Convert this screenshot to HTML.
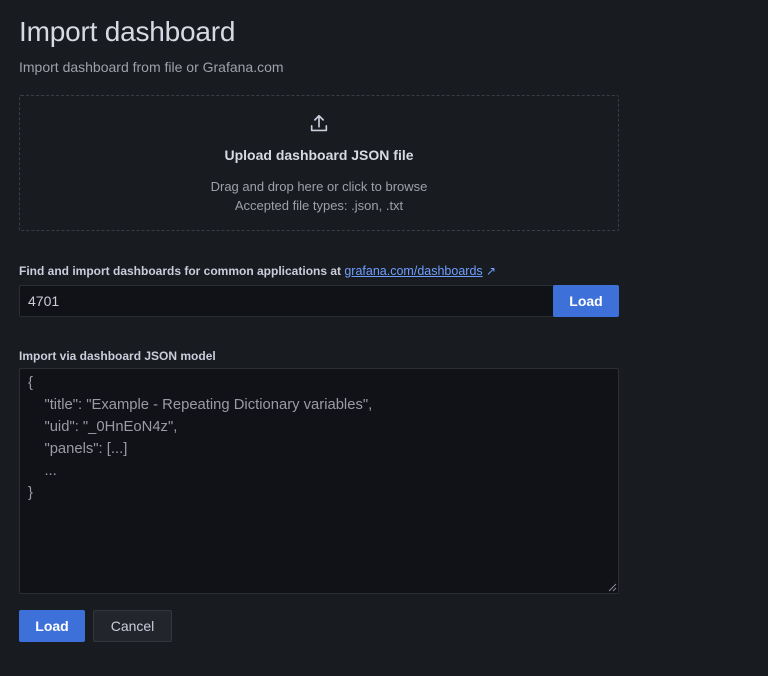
<!DOCTYPE html>
<html><head><meta charset="utf-8"><style>
*{box-sizing:border-box;margin:0;padding:0}
body{width:768px;height:676px;background:#181b1f;font-family:"Liberation Sans",sans-serif;color:#ccccdc;position:relative;overflow:hidden}
.a{position:absolute}
h1{position:absolute;left:19px;top:16px;font-size:28px;font-weight:400;color:#d8d9e4;letter-spacing:-0.2px}
.sub{left:19px;top:59px;font-size:14px;color:#9fa0ab}
.drop{left:19px;top:95px;width:600px;height:136px;border:1px dashed #3b3d44;border-radius:2px;text-align:center}
.lbl{font-size:12px;font-weight:700;color:#ccccdc}
.inp{left:19px;top:285px;width:535px;height:32px;background:#111217;border:1px solid #2c2e33;border-radius:2px 0 0 2px;font-size:14px;padding:7px 8px;color:#ccccdc}
.btn{background:#3d71d9;color:#fff;font-size:14px;font-weight:700;border-radius:2px;text-align:center;line-height:32px;height:32px}
.ta{left:19px;top:368px;width:600px;height:226px;background:#111217;border:1px solid #2c2e33;border-radius:2px;padding:3px 8px;font-size:14.8px;line-height:22px;color:#9a9ba5;white-space:pre}
</style></head><body>
<h1>Import dashboard</h1>
<div class="a sub">Import dashboard from file or Grafana.com</div>
<div class="a drop">
<svg class="a" style="left:288px;top:17px" width="22" height="22" viewBox="0 0 24 24" fill="none" stroke="#ccccdc" stroke-width="1.8" stroke-linecap="round" stroke-linejoin="round"><path d="M4 14v5h16v-5M12 3v12M7.5 7.5L12 3l4.5 4.5"/></svg>
<div class="a" style="left:0;width:100%;top:51px;font-size:14px;font-weight:700;color:#d8d9e4">Upload dashboard JSON file</div>
<div class="a" style="left:0;width:100%;top:81px;font-size:13px;color:#9fa0ab;line-height:19px">Drag and drop here or click to browse<br>Accepted file types: .json, .txt</div>
</div>
<div class="a lbl" style="left:19px;top:264px">Find and import dashboards for common applications at <span style="color:#6e9fff;text-decoration:underline;font-weight:400;font-size:12.5px">grafana.com/dashboards</span> <span style="color:#6e9fff;font-weight:400">&#x2197;</span></div>
<div class="a inp">4701</div>
<div class="a btn" style="left:553px;top:285px;width:66px">Load</div>
<div class="a lbl" style="left:19px;top:349px">Import via dashboard JSON model</div>
<div class="a ta">{
    "title": "Example - Repeating Dictionary variables",
    "uid": "_0HnEoN4z",
    "panels": [...]
    ...
}</div>
<svg class="a" style="left:608px;top:583px" width="9" height="9" viewBox="0 0 9 9" stroke="#8a8b94" stroke-width="1"><path d="M1 8L8 1M5 8L8 5"/></svg>
<div class="a btn" style="left:19px;top:610px;width:66px">Load</div>
<div class="a btn" style="left:93px;top:610px;width:79px;background:#22252b;border:1px solid #34363c;color:#ccccdc;font-weight:400;line-height:30px">Cancel</div>
</body></html>
